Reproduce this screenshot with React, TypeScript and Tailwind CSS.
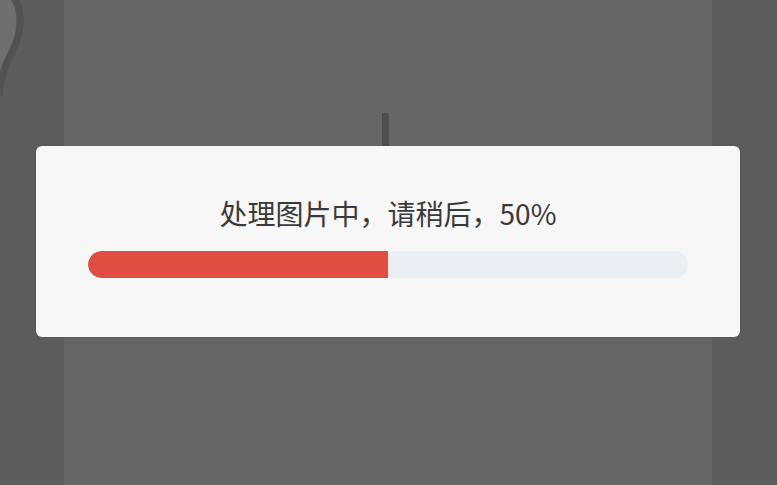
export default function App() {
  const progress = 50

  return (
    <div className="relative h-[485px] w-[777px] overflow-hidden bg-[#5c5c5c] font-['Noto_Sans_CJK_SC','Noto_Sans',sans-serif]">
      {/* dimmed page underneath */}
      <div className="flex h-full">
        <div className="relative w-16 shrink-0 bg-[#5c5c5c]">
          <svg className="absolute left-0 top-0" width="40" height="110" viewBox="0 0 40 110">
            <path d="M -2 -2 L 14 -2 C 23 12, 22 34, 11 54 C 5 64, 1 76, -1 96 L -2 96 Z" fill="#6f6f6f" />
            <path d="M 14 -2 C 23 12, 22 34, 11 54 C 5 64, 1 76, -1 96" fill="none" stroke="#525252" strokeWidth="7" />
          </svg>
        </div>
        <div className="flex flex-1 justify-center bg-[#666666]">
          <div className="ml-[-6px] mt-[113px] h-10 w-[7px] bg-[#4e4e4e]" />
        </div>
        <div className="w-[65px] shrink-0 bg-[#5c5c5c]" />
      </div>

      {/* loading dialog */}
      <div className="absolute left-9 top-[146px] flex w-[704px] flex-col items-center rounded-md bg-[#f7f7f7] px-[52px] pb-[59px] pt-[47px] shadow-[0_0_2px_rgba(0,0,0,0.15)]">
        <p className="text-[28px] font-normal leading-[40px] text-[#3a3a3a]">
          处理图片中，请稍后，{progress}%
        </p>
        <div className="mt-[18px] h-[27px] w-full overflow-hidden rounded-full bg-[#eaeef5]">
          <div className="h-full rounded-l-full bg-[#e24d41]" style={{ width: `${progress}%` }} />
        </div>
      </div>
    </div>
  )
}
